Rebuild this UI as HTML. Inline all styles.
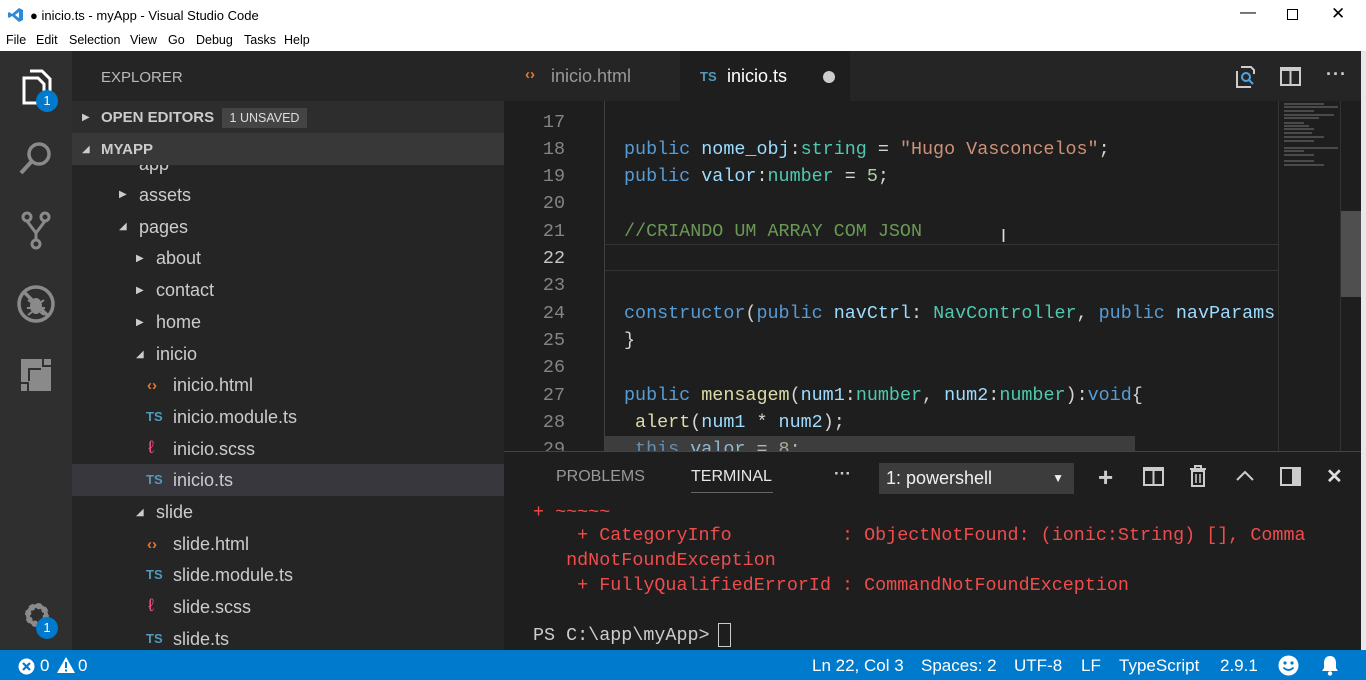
<!DOCTYPE html>
<html><head><meta charset="utf-8"><style>
*{margin:0;padding:0;box-sizing:border-box}
body{width:1366px;height:680px;overflow:hidden;background:#1e1e1e;font-family:"Liberation Sans",sans-serif;position:relative}
.abs{position:absolute}
#title{left:0;top:0;width:1366px;height:30px;background:#fff;font-size:13px;color:#000}
#menu{left:0;top:30px;width:1366px;height:21px;background:#fff;font-size:12.5px;color:#000}
#act{left:0;top:51px;width:72px;height:599px;background:#2f2f2f}
#side{left:72px;top:51px;width:432px;height:599px;background:#252526;color:#ccc}
.row{position:absolute;height:32px;line-height:32px;font-size:18px;color:#ccc;white-space:nowrap}
.tri{position:absolute;font-size:10px;color:#ccc}
.mono{font-family:"Liberation Mono",monospace;font-size:18.4px;white-space:pre}
.ln{position:absolute;left:505px;width:60px;text-align:right;color:#858585}
.cl{position:absolute;left:624px;color:#d4d4d4}
.k{color:#569cd6}.v{color:#9cdcfe}.t{color:#4ec9b0}.s{color:#ce9178}.c{color:#6a9955}.f{color:#dcdcaa}
.badge{position:absolute;width:22px;height:22px;border-radius:11px;background:#007acc;color:#fff;font-size:13px;text-align:center;line-height:22px}
.term{position:absolute;color:#f14c4c}
#status{left:0;top:650px;width:1366px;height:30px;background:#007acc;color:#fff;font-size:17px}
</style></head><body>
<div id="title" class="abs">
<svg class="abs" style="left:8px;top:7px" width="16" height="16" viewBox="0 0 16 16"><path d="M11 1l4 2v10l-4 2-7-6-3 2-1-1V6l1-1 3 2zM11 5L7 8l4 3z" fill="#2c8ad8"/></svg>
<span class="abs" style="left:30px;top:8px">● inicio.ts - myApp - Visual Studio Code</span>
<span class="abs" style="left:1240px;top:4px;font-size:16px">—</span>
<div class="abs" style="left:1287px;top:9px;width:11px;height:11px;border:1px solid #000"></div>
<span class="abs" style="left:1331px;top:4px;font-size:17px">✕</span>
</div>
<div id="menu" class="abs">
<span class="abs" style="left:6px;top:3px">File</span><span class="abs" style="left:36px;top:3px">Edit</span><span class="abs" style="left:69px;top:3px">Selection</span><span class="abs" style="left:130px;top:3px">View</span><span class="abs" style="left:168px;top:3px">Go</span><span class="abs" style="left:196px;top:3px">Debug</span><span class="abs" style="left:244px;top:3px">Tasks</span><span class="abs" style="left:284px;top:3px">Help</span>
</div>
<div id="act" class="abs">
<svg class="abs" style="left:20px;top:18px" width="34" height="36" viewBox="0 0 34 36"><path d="M10 2h12l8 8v20" fill="none" stroke="#fff" stroke-width="3"/><path d="M4 9h14l6 6v19H4z" fill="none" stroke="#fff" stroke-width="3"/></svg>
<div class="badge" style="left:36px;top:39px">1</div>
<svg class="abs" style="left:17px;top:88px" width="38" height="38" viewBox="0 0 38 38"><circle cx="22" cy="15" r="10" fill="none" stroke="#8a8a8a" stroke-width="3.5"/><path d="M15 22L4 34" stroke="#8a8a8a" stroke-width="4"/></svg>
<svg class="abs" style="left:20px;top:160px" width="32" height="40" viewBox="0 0 32 40"><circle cx="7" cy="6" r="4" fill="none" stroke="#8a8a8a" stroke-width="3"/><circle cx="25" cy="6" r="4" fill="none" stroke="#8a8a8a" stroke-width="3"/><circle cx="16" cy="33" r="4" fill="none" stroke="#8a8a8a" stroke-width="3"/><path d="M7 10l9 12 9-12M16 22v7" fill="none" stroke="#8a8a8a" stroke-width="3"/></svg>
<svg class="abs" style="left:16px;top:233px" width="40" height="40" viewBox="0 0 40 40"><circle cx="20" cy="20" r="17" fill="none" stroke="#8a8a8a" stroke-width="3.5"/><path d="M8 8l24 24" stroke="#8a8a8a" stroke-width="3.5"/><ellipse cx="20" cy="22" rx="6" ry="8" fill="#8a8a8a"/><path d="M12 16l4 3M28 16l-4 3M11 24h5M29 24h-5M12 31l4-3M28 31l-4-3" stroke="#8a8a8a" stroke-width="2"/></svg>
<svg class="abs" style="left:21px;top:308px" width="30" height="32" viewBox="0 0 30 32"><path d="M0 0h30v32H0z" fill="#8a8a8a"/><rect x="7" y="9" width="13" height="13" fill="#2f2f2f"/><rect x="9" y="11" width="13" height="13" fill="#8a8a8a"/><path d="M22 0v7h8M0 24h7v8" stroke="#2f2f2f" stroke-width="2" fill="none"/></svg>
<svg class="abs" style="left:21px;top:548px" width="32" height="32" viewBox="0 0 32 32"><circle cx="16" cy="16" r="9" fill="none" stroke="#8a8a8a" stroke-width="6" stroke-dasharray="4 3"/><circle cx="16" cy="16" r="9" fill="none" stroke="#8a8a8a" stroke-width="4"/></svg>
<div class="badge" style="left:36px;top:566px">1</div>
</div>
<div id="side" class="abs">
<span class="abs" style="left:29px;top:18px;font-size:15px;color:#bbb">EXPLORER</span>
<div class="abs" style="left:0;top:50px;width:432px;height:32px;background:#2d2d2e"></div>
<span class="tri" style="left:10px;top:61px">▶</span>
<span class="abs" style="left:29px;top:58px;font-size:15px;font-weight:bold;color:#ccc">OPEN EDITORS</span>
<span class="abs" style="left:150px;top:57px;width:85px;height:20px;background:#444;font-size:12.5px;line-height:20px;text-align:center;color:#ddd">1 UNSAVED</span>
<div class="abs" style="left:0;top:82px;width:432px;height:32px;background:#383838"></div>
<span class="tri" style="left:10px;top:93px">◢</span>
<span class="abs" style="left:29px;top:90px;font-size:15px;font-weight:bold;color:#ccc">MYAPP</span>
</div>
<div class="abs" style="left:72px;top:165px;width:432px;height:485px;overflow:hidden">
<div class="row" style="left:67px;top:-17px">app</div>
<span class="tri" style="left:47px;top:24px">▶</span><div class="row" style="left:67px;top:14px">assets</div>
<span class="tri" style="left:47px;top:56px">◢</span><div class="row" style="left:67px;top:46px">pages</div>
<span class="tri" style="left:64px;top:88px">▶</span><div class="row" style="left:84px;top:77px">about</div>
<span class="tri" style="left:64px;top:120px">▶</span><div class="row" style="left:84px;top:109px">contact</div>
<span class="tri" style="left:64px;top:152px">▶</span><div class="row" style="left:84px;top:141px">home</div>
<span class="tri" style="left:64px;top:184px">◢</span><div class="row" style="left:84px;top:173px">inicio</div>
<div class="abs" style="left:0;top:299px;width:432px;height:32px;background:#37373d"></div>
<span class="abs" style="left:75px;top:212px;color:#e37933;font-size:15px;font-weight:bold">‹›</span><div class="row" style="left:101px;top:204px">inicio.html</div>
<span class="abs" style="left:74px;top:244px;color:#519aba;font-size:13px;font-weight:bold">TS</span><div class="row" style="left:101px;top:236px">inicio.module.ts</div>
<span class="abs" style="left:76px;top:272px;color:#f55385;font-size:18px">ℓ</span><div class="row" style="left:101px;top:268px">inicio.scss</div>
<span class="abs" style="left:74px;top:307px;color:#519aba;font-size:13px;font-weight:bold">TS</span><div class="row" style="left:101px;top:299px">inicio.ts</div>
<span class="tri" style="left:64px;top:342px">◢</span><div class="row" style="left:84px;top:331px">slide</div>
<span class="abs" style="left:75px;top:371px;color:#e37933;font-size:15px;font-weight:bold">‹›</span><div class="row" style="left:101px;top:363px">slide.html</div>
<span class="abs" style="left:74px;top:402px;color:#519aba;font-size:13px;font-weight:bold">TS</span><div class="row" style="left:101px;top:394px">slide.module.ts</div>
<span class="abs" style="left:76px;top:430px;color:#f55385;font-size:18px">ℓ</span><div class="row" style="left:101px;top:426px">slide.scss</div>
<span class="abs" style="left:74px;top:466px;color:#519aba;font-size:13px;font-weight:bold">TS</span><div class="row" style="left:101px;top:458px">slide.ts</div>
</div>
<!-- tabs -->
<div class="abs" style="left:504px;top:51px;width:862px;height:50px;background:#252526"></div>
<div class="abs" style="left:680px;top:51px;width:170px;height:50px;background:#1e1e1e"></div>
<span class="abs" style="left:525px;top:66px;color:#e37933;font-size:15px;font-weight:bold">‹›</span>
<span class="abs" style="left:551px;top:66px;color:#999;font-size:18px">inicio.html</span>
<span class="abs" style="left:700px;top:69px;color:#519aba;font-size:13px;font-weight:bold">TS</span>
<span class="abs" style="left:727px;top:66px;color:#fff;font-size:18px">inicio.ts</span>
<div class="abs" style="left:823px;top:71px;width:12px;height:12px;border-radius:6px;background:#ccc"></div>
<svg class="abs" style="left:1233px;top:65px" width="24" height="24" viewBox="0 0 24 24"><path d="M4 6v16h14M8 2h10l3 3v4" fill="none" stroke="#ccc" stroke-width="2"/><circle cx="13" cy="12" r="4" fill="none" stroke="#4ea5e0" stroke-width="2"/><path d="M16 15l4 4" stroke="#4ea5e0" stroke-width="2"/></svg>
<svg class="abs" style="left:1280px;top:67px" width="21" height="19" viewBox="0 0 21 19"><rect x="1" y="1" width="19" height="17" fill="none" stroke="#ccc" stroke-width="2"/><path d="M10.5 1v17M1 3h19" stroke="#ccc" stroke-width="2"/></svg>
<span class="abs" style="left:1326px;top:64px;color:#ccc;font-size:18px;font-weight:bold;letter-spacing:1px">···</span>
<!-- editor -->
<div class="abs" style="left:604px;top:101px;width:1px;height:350px;background:#404040"></div>
<div class="abs" style="left:605px;top:244px;width:673px;height:27px;border-top:1px solid #333;border-bottom:1px solid #333"></div>
<div class="mono" style="position:absolute;left:0;top:4px">
<div class="ln" style="top:108px">17</div>
<div class="ln" style="top:135px">18</div>
<div class="ln" style="top:162px">19</div>
<div class="ln" style="top:189px">20</div>
<div class="ln" style="top:217px">21</div>
<div class="ln" style="top:244px;color:#c6c6c6">22</div>
<div class="ln" style="top:271px">23</div>
<div class="ln" style="top:299px">24</div>
<div class="ln" style="top:326px">25</div>
<div class="ln" style="top:353px">26</div>
<div class="ln" style="top:381px">27</div>
<div class="ln" style="top:408px">28</div>
<div class="ln" style="top:435px;height:12px;overflow:hidden">29</div>
<div class="cl" style="top:135px"><span class="k">public</span> <span class="v">nome_obj</span>:<span class="t">string</span> = <span class="s">"Hugo Vasconcelos"</span>;</div>
<div class="cl" style="top:162px"><span class="k">public</span> <span class="v">valor</span>:<span class="t">number</span> = <span style="color:#b5cea8">5</span>;</div>
<div class="cl c" style="top:217px">//CRIANDO UM ARRAY COM JSON</div>
<div class="cl" style="top:299px;width:654px;overflow:hidden"><span class="k">constructor</span>(<span class="k">public</span> <span class="v">navCtrl</span>: <span class="t">NavController</span>, <span class="k">public</span> <span class="v">navParams</span></div>
<div class="cl" style="top:326px">}</div>
<div class="cl" style="top:381px"><span class="k">public</span> <span class="f">mensagem</span>(<span class="v">num1</span>:<span class="t">number</span>, <span class="v">num2</span>:<span class="t">number</span>):<span class="k">void</span>{</div>
<div class="cl" style="top:408px"> <span class="f">alert</span>(<span class="v">num1</span> * <span class="v">num2</span>);</div>
<div class="cl" style="top:435px;height:12px;overflow:hidden"> <span class="k">this</span>.<span class="v">valor</span> = <span style="color:#b5cea8">8</span>;</div>
</div>
<div class="abs" style="left:605px;top:436px;width:530px;height:15px;background:rgba(120,120,120,.35)"></div>
<span class="abs" style="left:1001px;top:226px;color:#ddd;font-size:18px">I</span>
<div class="abs" style="left:1278px;top:101px;width:1px;height:350px;background:#333"></div>
<div class="abs" style="left:1340px;top:101px;width:1px;height:350px;background:#333"></div>
<div class="abs" style="left:1341px;top:211px;width:20px;height:86px;background:#4f4f4f"></div>
<div class="abs" style="left:1361px;top:51px;width:5px;height:600px;background:#e8e8e8"></div>
<svg class="abs" style="left:1282px;top:101px" width="56" height="80"><g stroke="#777" stroke-width="1"><path d="M2 3h40M2 6h55M2 10h30M2 14h50M2 17h35M2 22h20M2 25h25M2 28h30M2 32h28M2 36h40M2 40h30M2 47h55M2 50h20M2 54h30M2 60h30M2 64h40"/></g></svg>
<!-- panel -->
<div class="abs" style="left:504px;top:451px;width:857px;height:1px;background:#444"></div>
<span class="abs" style="left:556px;top:468px;color:#999;font-size:16px">PROBLEMS</span>
<span class="abs" style="left:691px;top:468px;color:#e7e7e7;font-size:16px">TERMINAL</span>
<div class="abs" style="left:691px;top:492px;width:82px;height:1px;background:#666"></div>
<span class="abs" style="left:834px;top:464px;color:#ccc;font-size:17px;font-weight:bold">···</span>
<div class="abs" style="left:879px;top:463px;width:195px;height:31px;background:#3c3c3c;color:#f0f0f0;font-size:18px;line-height:31px;padding-left:7px">1: powershell<span style="position:absolute;right:10px;font-size:12px">▼</span></div>
<span class="abs" style="left:1098px;top:462px;color:#ccc;font-size:26px;font-weight:bold">+</span>
<svg class="abs" style="left:1143px;top:467px" width="21" height="19"><rect x="1" y="1" width="19" height="17" fill="none" stroke="#ccc" stroke-width="2"/><path d="M10.5 1v17M1 3h19" stroke="#ccc" stroke-width="2"/></svg>
<svg class="abs" style="left:1189px;top:465px" width="18" height="22"><path d="M1 4h16M6 4V1h6v3M3 6h12v15H3z" fill="none" stroke="#ccc" stroke-width="2"/><path d="M7 9v9M11 9v9" stroke="#ccc" stroke-width="1.5"/></svg>
<svg class="abs" style="left:1235px;top:469px" width="20" height="12"><path d="M2 11l8-8 8 8" fill="none" stroke="#ccc" stroke-width="2"/></svg>
<svg class="abs" style="left:1280px;top:467px" width="21" height="19"><rect x="1" y="1" width="19" height="17" fill="none" stroke="#ccc" stroke-width="2"/><rect x="12" y="1" width="8" height="17" fill="#ccc"/></svg>
<span class="abs" style="left:1326px;top:464px;color:#ddd;font-size:20px;font-weight:bold">✕</span>
<div class="mono">
<div class="term" style="left:533px;top:502px">+ ~~~~~</div>
<div class="term" style="left:533px;top:525px">    + CategoryInfo          : ObjectNotFound: (ionic:String) [], Comma</div>
<div class="term" style="left:533px;top:550px">   ndNotFoundException</div>
<div class="term" style="left:533px;top:575px">    + FullyQualifiedErrorId : CommandNotFoundException</div>
<div class="term" style="left:533px;top:625px;color:#ccc">PS C:\app\myApp&gt; </div>
</div>
<div class="abs" style="left:718px;top:623px;width:13px;height:24px;border:1.5px solid #ccc"></div>
<div id="status" class="abs">
<svg class="abs" style="left:18px;top:8px" width="17" height="17"><circle cx="8.5" cy="8.5" r="8" fill="#fff"/><path d="M5 5l7 7M12 5l-7 7" stroke="#007acc" stroke-width="2.2"/></svg>
<span class="abs" style="left:40px;top:6px">0</span>
<svg class="abs" style="left:57px;top:7px" width="18" height="16"><path d="M9 0l9 16H0z" fill="#fff"/><path d="M9 5v6M9 12.5v2" stroke="#007acc" stroke-width="2"/></svg>
<span class="abs" style="left:78px;top:6px">0</span>
<span class="abs" style="left:812px;top:6px">Ln 22, Col 3</span>
<span class="abs" style="left:921px;top:6px">Spaces: 2</span>
<span class="abs" style="left:1014px;top:6px">UTF-8</span>
<span class="abs" style="left:1081px;top:6px">LF</span>
<span class="abs" style="left:1119px;top:6px">TypeScript</span>
<span class="abs" style="left:1220px;top:6px">2.9.1</span>
<svg class="abs" style="left:1278px;top:5px" width="21" height="21"><circle cx="10.5" cy="10.5" r="10" fill="#fff"/><circle cx="7" cy="8" r="1.6" fill="#007acc"/><circle cx="14" cy="8" r="1.6" fill="#007acc"/><path d="M5.5 12.5q5 5 10 0" fill="none" stroke="#007acc" stroke-width="1.8"/></svg>
<svg class="abs" style="left:1321px;top:5px" width="18" height="21"><path d="M9 1c-4 0-6 3-6 7v5l-2 3h16l-2-3V8c0-4-2-7-6-7z" fill="#fff"/><circle cx="9" cy="18.5" r="2.2" fill="#fff"/></svg>
</div>
</body></html>
